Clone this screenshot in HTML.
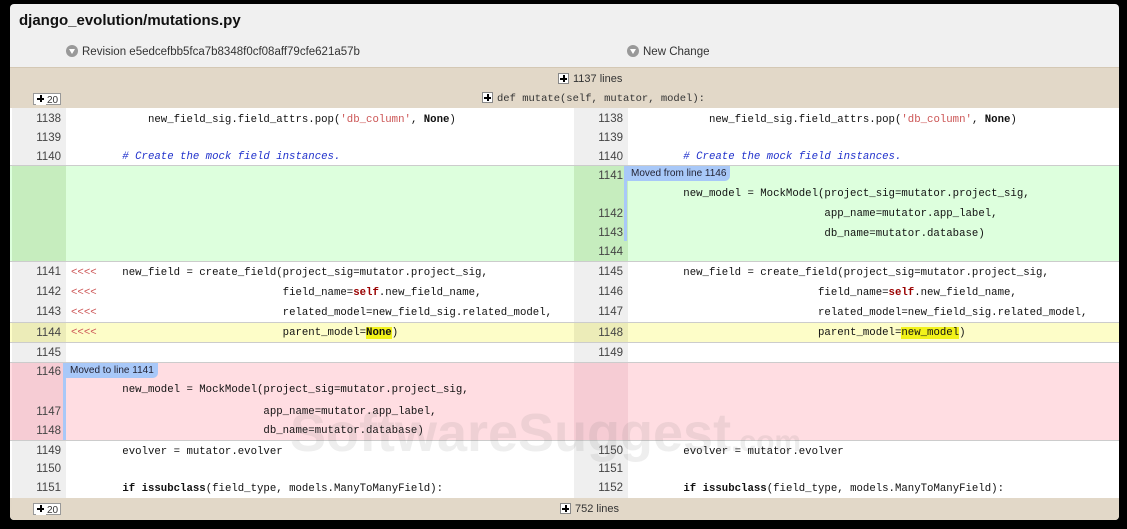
<!DOCTYPE html>
<html><head><meta charset="utf-8"><style>
*{margin:0;padding:0;box-sizing:border-box}
body{width:1127px;height:529px;background:#000;position:relative;overflow:hidden;font-family:"Liberation Sans","DejaVu Sans",sans-serif}
#p{position:absolute;left:10px;top:4px;width:1109px;height:516px;background:#f0f0f0;border-radius:4px;overflow:hidden}
.t{position:absolute;left:9px;top:8px;font-weight:bold;font-size:15px;color:#111}
.rev{position:absolute;top:41px;font-size:11.5px;color:#333}
.ic{display:inline-block;width:12px;height:12px;border-radius:50%;background:#999;vertical-align:-2px;margin-right:4px;position:relative}
.ic:after{content:"";position:absolute;left:3px;top:4px;border-left:3px solid transparent;border-right:3px solid transparent;border-top:5px solid #fff}
.tan{position:absolute;left:0;width:1109px;background:#e2d8c8}
.pb{display:inline-block;width:11px;height:11px;border:1px solid #888;background:#fff;position:relative;vertical-align:-2px;margin-right:4px}
.pb:before{content:"";position:absolute;left:1px;top:4px;width:7px;height:1px;background:#000;border-top:1px solid #000}
.pb:after{content:"";position:absolute;left:4px;top:1px;width:2px;height:7px;background:#000}
.b20{position:absolute;font-size:10px;border:1px solid #999;background:#fff;padding:0 2px;height:12px;line-height:10px;color:#333}
.r{position:absolute;left:0;width:1109px;background:#fff;font-family:"Liberation Mono",monospace;font-size:10.7px;color:#111}
.n{position:absolute;width:54px;text-align:right;padding-right:5px;font-family:"Liberation Sans",sans-serif;font-size:11.5px;color:#444;height:100%;background:#efefef}
.nl{left:2px}.nr{left:564px}
.c{position:absolute;white-space:pre}
.cl{left:61px}.cr{left:622px}
.g{background:#dfd}.g .n{background:#c6edbe}
.d{background:#ffdde2}.d .n{background:#f6ccd4}
.y{background:#fdfdc8}.y .n{background:#ececb8}
.bt{border-top:1px solid #ccc}
.cm{color:#2233cc;font-style:italic}.s{color:#c55}.k{font-weight:bold}.sf{color:#900;font-weight:bold}.hl{background:#f2f21a}
.mv{position:absolute;background:#a8c8f8;font-family:"Liberation Sans",sans-serif;font-size:10px;color:#223;padding:2px 4px;border-radius:0 0 5px 0;height:15px}
.bar{position:absolute;width:3px;background:#a8c8f8}
.wm{position:absolute;left:280px;top:398px;font-size:54px;font-weight:bold;color:rgba(120,120,120,0.13);font-family:"Liberation Sans",sans-serif;white-space:nowrap}
</style></head><body><div id="p">
<div class="t">django_evolution/mutations.py</div>
<div class="rev" style="left:56px"><span class="ic"></span>Revision e5edcefbb5fca7b8348f0cf08aff79cfe621a57b</div>
<div class="rev" style="left:617px"><span class="ic"></span>New Change</div>
<div class="tan" style="top:63px;height:41px;border-top:1px solid #d4c8b4">
 <div style="position:absolute;left:548px;top:5px;font-size:11px;color:#333"><span class="pb"></span>1137 lines</div>
 <div class="b20" style="left:23px;top:25px"><span class="pb" style="border:none;margin-right:1px;width:10px"></span>20</div>
 <div style="position:absolute;left:472px;top:24px;font-size:10.5px;font-family:'Liberation Mono',monospace;color:#333"><span class="pb"></span>def mutate(self, mutator, model):</div>
</div>

<div class="r" style="top:104px;height:19px"><div class="n nl" style="line-height:19px;padding-top:2px">1138</div><div class="c cl" style="top:6px">            new_field_sig.field_attrs.pop(<span class="s">'db_column'</span>, <span class="k">None</span>)</div><div class="n nr" style="line-height:19px;padding-top:2px">1138</div><div class="c cr" style="top:6px">            new_field_sig.field_attrs.pop(<span class="s">'db_column'</span>, <span class="k">None</span>)</div></div>
<div class="r" style="top:123px;height:19px"><div class="n nl" style="line-height:19px;padding-top:2px">1139</div><div class="n nr" style="line-height:19px;padding-top:2px">1139</div></div>
<div class="r" style="top:142px;height:19px"><div class="n nl" style="line-height:19px;padding-top:2px">1140</div><div class="c cl cm" style="top:5px">        # Create the mock field instances.</div><div class="n nr" style="line-height:19px;padding-top:2px">1140</div><div class="c cr cm" style="top:5px">        # Create the mock field instances.</div></div>

<div class="r g bt" style="top:161px;height:96px">
 <div class="n nl"></div><div class="n nr"></div>
 <div style="position:absolute;left:564px;top:0;width:54px;font-family:'Liberation Sans',sans-serif;font-size:11.5px;color:#444;text-align:right;padding-right:5px">
  <div style="position:absolute;right:5px;top:4px">1141</div><div style="position:absolute;right:5px;top:42px">1142</div><div style="position:absolute;right:5px;top:61px">1143</div><div style="position:absolute;right:5px;top:80px">1144</div></div>
 <div class="bar" style="left:614px;top:0;height:75px"></div>
 <div class="mv" style="left:617px;top:0">Moved from line 1146</div>
 <div class="c cr" style="top:22px">        new_model = MockModel(project_sig=mutator.project_sig,</div>
 <div class="c cr" style="top:42px">                              app_name=mutator.app_label,</div>
 <div class="c cr" style="top:62px">                              db_name=mutator.database)</div>
</div>

<div class="r bt" style="top:257px;height:61px">
 <div class="n nl"></div><div class="n nr"></div>
 <div style="position:absolute;left:2px;width:54px;font-family:'Liberation Sans',sans-serif;font-size:11.5px;color:#444"><div style="position:absolute;right:5px;top:4px">1141</div><div style="position:absolute;right:5px;top:24px">1142</div><div style="position:absolute;right:5px;top:44px">1143</div></div>
 <div style="position:absolute;left:564px;width:54px;font-family:'Liberation Sans',sans-serif;font-size:11.5px;color:#444"><div style="position:absolute;right:5px;top:4px">1145</div><div style="position:absolute;right:5px;top:24px">1146</div><div style="position:absolute;right:5px;top:44px">1147</div></div>
 <div class="c cl" style="top:5px"><span class="s">&lt;&lt;&lt;&lt;</span>    new_field = create_field(project_sig=mutator.project_sig,</div>
 <div class="c cl" style="top:25px"><span class="s">&lt;&lt;&lt;&lt;</span>                             field_name=<span class="sf">self</span>.new_field_name,</div>
 <div class="c cl" style="top:45px"><span class="s">&lt;&lt;&lt;&lt;</span>                             related_model=new_field_sig.related_model,</div>
 <div class="c cr" style="top:5px">        new_field = create_field(project_sig=mutator.project_sig,</div>
 <div class="c cr" style="top:25px">                             field_name=<span class="sf">self</span>.new_field_name,</div>
 <div class="c cr" style="top:45px">                             related_model=new_field_sig.related_model,</div>
</div>
<div class="r y bt" style="top:318px;height:20px"><div class="n nl" style="line-height:20px">1144</div><div class="c cl" style="top:4px"><span class="s">&lt;&lt;&lt;&lt;</span>                             parent_model=<span class="hl k">None</span>)</div><div class="n nr" style="line-height:20px">1148</div><div class="c cr" style="top:4px">                             parent_model=<span class="hl">new_model</span>)</div></div>
<div class="r bt" style="top:338px;height:20px"><div class="n nl" style="line-height:20px">1145</div><div class="n nr" style="line-height:20px">1149</div></div>

<div class="r d bt" style="top:358px;height:78px">
 <div class="n nl"></div><div class="n nr"></div>
 <div style="position:absolute;left:2px;width:54px;font-family:'Liberation Sans',sans-serif;font-size:11.5px;color:#444"><div style="position:absolute;right:5px;top:3px">1146</div><div style="position:absolute;right:5px;top:43px">1147</div><div style="position:absolute;right:5px;top:62px">1148</div></div>
 <div class="bar" style="left:53px;top:0;height:78px"></div>
 <div class="mv" style="left:56px;top:0">Moved to line 1141</div>
 <div class="c cl" style="top:21px">        new_model = MockModel(project_sig=mutator.project_sig,</div>
 <div class="c cl" style="top:43px">                              app_name=mutator.app_label,</div>
 <div class="c cl" style="top:62px">                              db_name=mutator.database)</div>
</div>

<div class="r bt" style="top:436px;height:58px">
 <div class="n nl"></div><div class="n nr"></div>
 <div style="position:absolute;left:2px;width:54px;font-family:'Liberation Sans',sans-serif;font-size:11.5px;color:#444"><div style="position:absolute;right:5px;top:4px">1149</div><div style="position:absolute;right:5px;top:22px">1150</div><div style="position:absolute;right:5px;top:41px">1151</div></div>
 <div style="position:absolute;left:564px;width:54px;font-family:'Liberation Sans',sans-serif;font-size:11.5px;color:#444"><div style="position:absolute;right:5px;top:4px">1150</div><div style="position:absolute;right:5px;top:22px">1151</div><div style="position:absolute;right:5px;top:41px">1152</div></div>
 <div class="c cl" style="top:5px">        evolver = mutator.evolver</div>
 <div class="c cl" style="top:42px">        <span class="k">if</span> <span class="k">issubclass</span>(field_type, models.ManyToManyField):</div>
 <div class="c cr" style="top:5px">        evolver = mutator.evolver</div>
 <div class="c cr" style="top:42px">        <span class="k">if</span> <span class="k">issubclass</span>(field_type, models.ManyToManyField):</div>
</div>
<div class="tan" style="top:494px;height:22px">
 <div class="b20" style="left:23px;top:5px"><span class="pb" style="border:none;margin-right:1px;width:10px"></span>20</div>
 <div style="position:absolute;left:550px;top:5px;font-size:11px;color:#333"><span class="pb"></span>752 lines</div>
</div>
<div class="wm">SoftwareSuggest<span style="font-size:30px">.com</span></div>
</div></body></html>
